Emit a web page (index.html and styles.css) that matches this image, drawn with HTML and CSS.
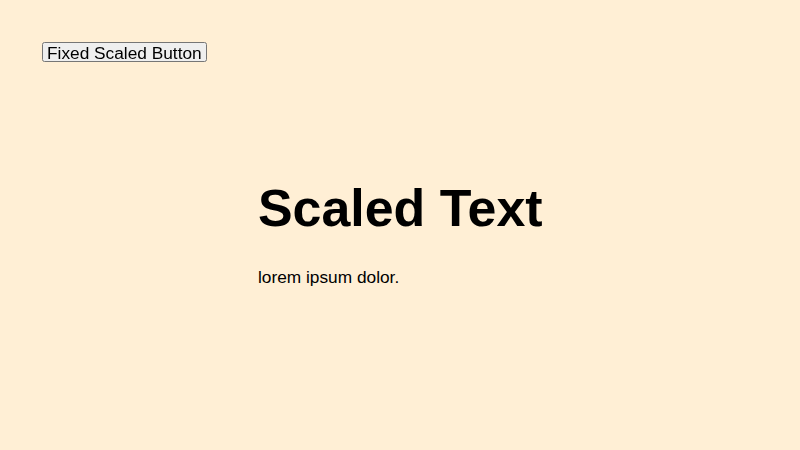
FILE: index.html
```html
<!DOCTYPE html>
<html>
<head>
<meta charset="utf-8">
<link rel="stylesheet" href="styles.css">
</head>
<body>
<button class="fixed-btn">Fixed Scaled Button</button>
<main class="content">
  <h1 class="title">Scaled Text</h1>
  <p class="text">lorem ipsum dolor.</p>
</main>
</body>
</html>
```
FILE: styles.css
```css
html, body {
  margin: 0;
  padding: 0;
  background: papayawhip;
  font-family: "Liberation Sans", Arial, sans-serif;
  font-size: 17.3px;
  color: #000;
}
.fixed-btn {
  position: fixed;
  top: 42px;
  left: 42px;
  font-family: "Liberation Sans", Arial, sans-serif;
  font-size: 17.3px;
  padding: 0 3px;
  height: 20px;
  line-height: 18px;
}
.content {
  width: 284px;
  margin: 0 auto;
  padding-top: 178px;
}
.title {
  margin: 0;
  font-size: 3em;
  font-weight: bold;
  line-height: normal;
  white-space: nowrap;
}
.text {
  margin: 29px 0 0;
  line-height: normal;
}
```
